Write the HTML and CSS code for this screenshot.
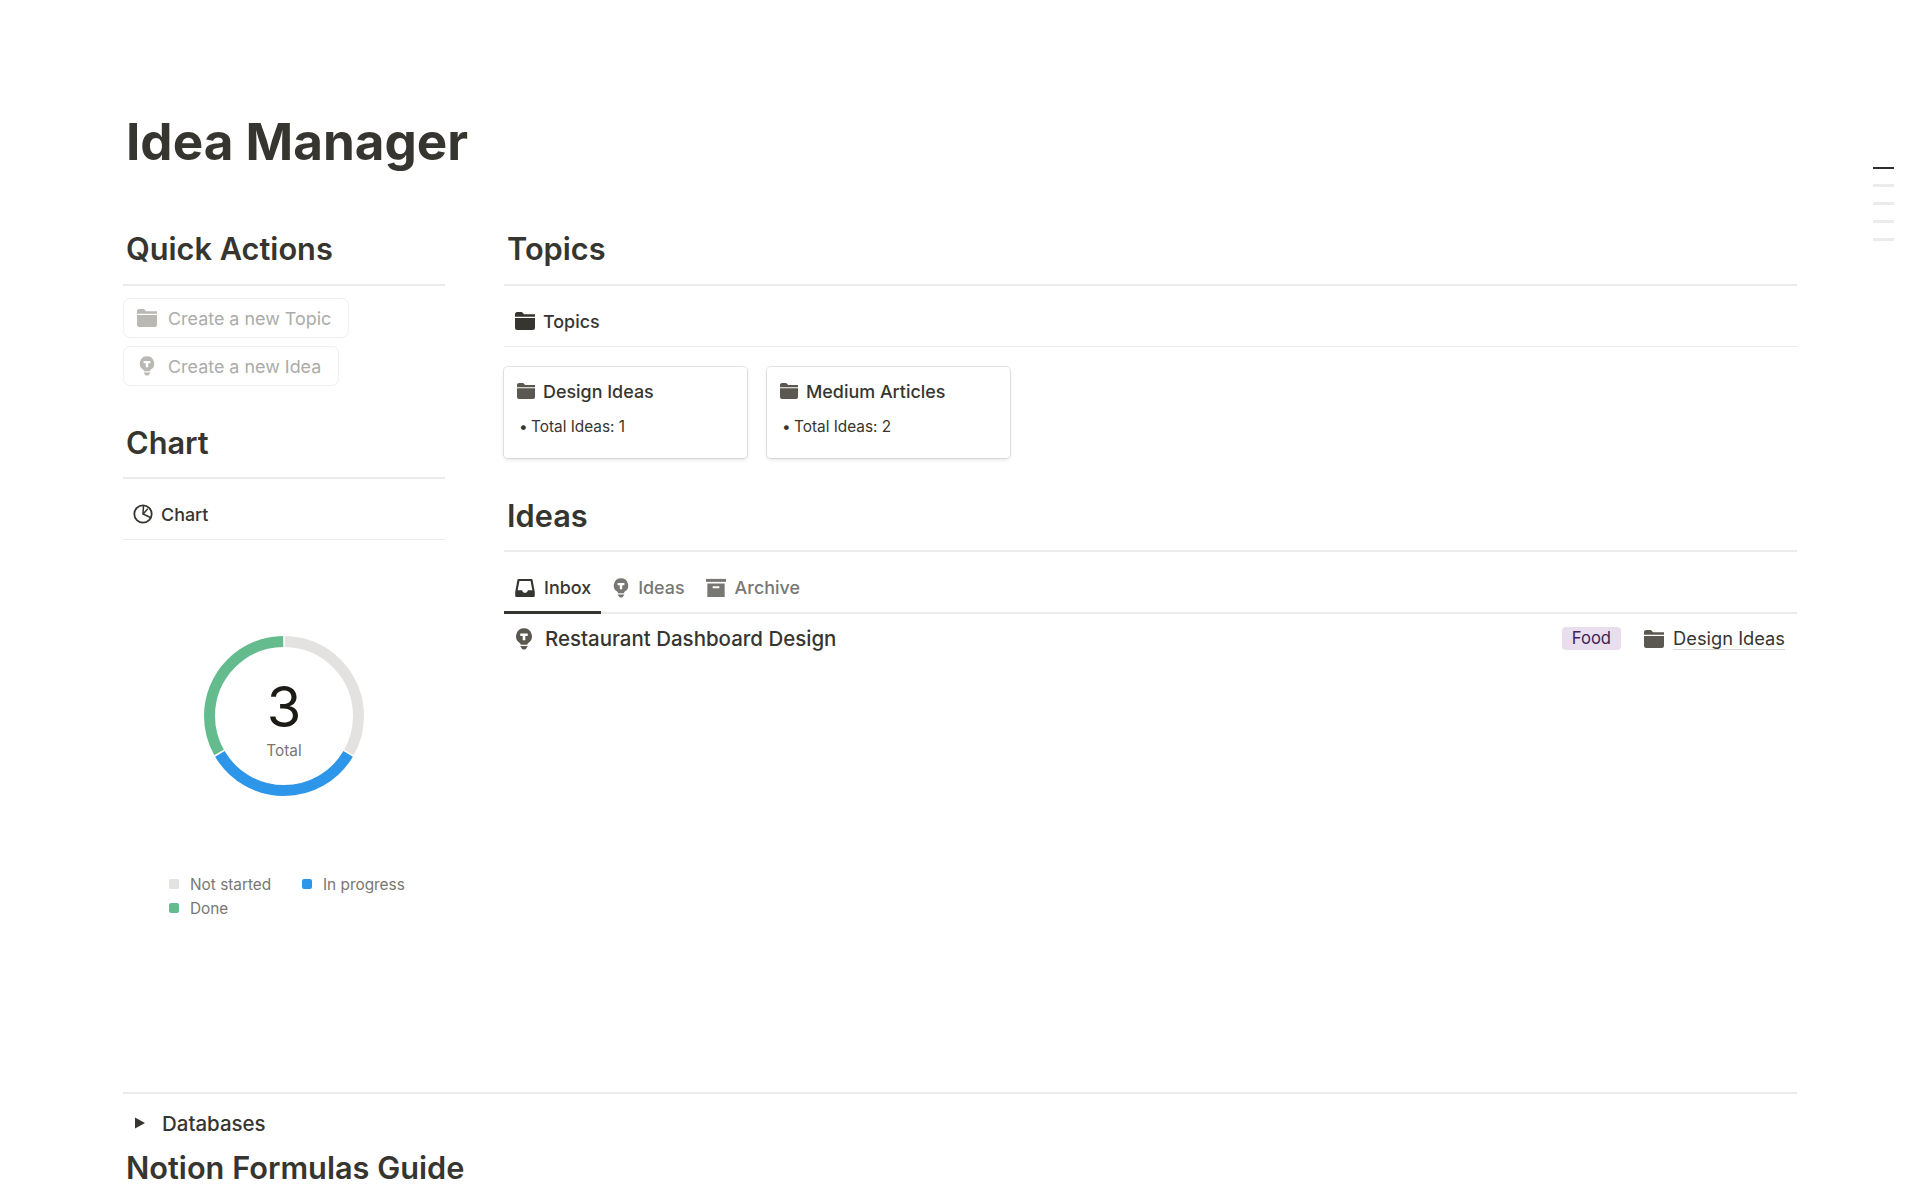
FILE: index.html
```html
<!DOCTYPE html>
<html lang="en">
<head>
<meta charset="utf-8">
<title>Idea Manager</title>
<link rel="stylesheet" href="styles.css">
</head>
<body>
<svg class="defs" width="0" height="0" aria-hidden="true">
  <symbol id="folder" viewBox="0 0 18 18">
    <path d="M0 3C0 1.900.9 1 2 1h4.200l2 2H18v2.200H0z"/>
    <path d="M0 6.200h18V15a2 2 0 0 1-2 2H2a2 2 0 0 1-2-2z"/>
  </symbol>
  <symbol id="bulb" viewBox="0 0 16 20">
    <path fill-rule="evenodd" d="M8 .3a7.200 7.200 0 0 0-3.800 13.300c.5.400.7.900.8 1.700h6c.1-.8.3-1.300.8-1.700A7.200 7.200 0 0 0 8 .3zM4.600 5h6.800v2.200H9.200v4H6.800v-4H4.600z"/>
    <path d="M4.500 16.400h7l-1.800 2.700c-.2.300-.5.400-.8.400H7.100c-.3 0-.6-.1-.8-.4z"/>
  </symbol>
  <symbol id="inbox" viewBox="0 0 18 18">
    <path fill-rule="evenodd" d="M3.200 .8h11.600c.5 0 .9.3 1 .8l2 10.900V16c0 .7-.5 1.200-1.200 1.200H1.400C.7 17.200.2 16.700.2 16v-3.500l2-10.900c.1-.5.5-.8 1-.8zM4 2.600 2.400 11h4c.2 1.400 1.300 2.300 2.600 2.300s2.400-.9 2.600-2.300h4L14 2.600z"/>
  </symbol>
  <symbol id="archive" viewBox="0 0 18 18">
    <path d="M0 .8h18v2.700H0z"/>
    <path fill-rule="evenodd" d="M1.200 5h15.600v12.200H1.200zM6 7.400v1.900h6V7.400z"/>
  </symbol>
  <symbol id="pie" viewBox="0 0 20 20">
    <circle cx="10" cy="10" r="8.700" fill="none" stroke="currentColor" stroke-width="1.800"/>
    <path d="M10.500 1.500 10 10l7.500 3.500M10 10l4.800-5.200" fill="none" stroke="currentColor" stroke-width="1.500"/>
  </symbol>
</svg>

<nav class="toc" aria-label="Outline">
  <span class="toc-line toc-active"></span>
  <span class="toc-line"></span>
  <span class="toc-line"></span>
  <span class="toc-line"></span>
  <span class="toc-line"></span>
</nav>

<main class="page">
  <h1 class="title">Idea Manager</h1>

  <div class="columns">
    <section class="left">
      <h2 class="heading">Quick Actions</h2>
      <div class="buttons">
        <a class="action"><svg class="ic-folder"><use href="#folder"/></svg>Create a new Topic</a>
        <a class="action"><svg class="ic-bulb"><use href="#bulb"/></svg>Create a new Idea</a>
      </div>

      <h2 class="heading heading-chart">Chart</h2>
      <div class="view-row view-row-chart">
        <svg class="ic-pie"><use href="#pie"/></svg><span>Chart</span>
      </div>

      <div class="donut">
        <svg class="donut-ring" viewBox="0 0 160 160">
          <g fill="none" stroke-width="11" transform="rotate(-90 80 80)">
            <circle cx="80" cy="80" r="74.500" pathLength="300" stroke="#e3e2e0" stroke-dasharray="99 201" stroke-dashoffset="-0.500"/>
            <circle cx="80" cy="80" r="74.500" pathLength="300" stroke="#2e96e9" stroke-dasharray="99 201" stroke-dashoffset="-100.500"/>
            <circle cx="80" cy="80" r="74.500" pathLength="300" stroke="#64bc8e" stroke-dasharray="99 201" stroke-dashoffset="-200.500"/>
          </g>
        </svg>
        <div class="donut-label">
          <span class="donut-num">3</span>
          <span class="donut-cap">Total</span>
        </div>
      </div>

      <ul class="legend">
        <li><i class="sw sw-grey"></i>Not started</li>
        <li><i class="sw sw-blue"></i>In progress</li>
        <li><i class="sw sw-green"></i>Done</li>
      </ul>
    </section>

    <section class="right">
      <h2 class="heading">Topics</h2>
      <div class="view-row">
        <svg class="ic-folder"><use href="#folder"/></svg><span>Topics</span>
      </div>
      <div class="cards">
        <article class="card">
          <div class="card-title"><svg class="ic-folder-sm"><use href="#folder"/></svg>Design Ideas</div>
          <div class="card-meta"><span class="dot">•</span>Total Ideas: 1</div>
        </article>
        <article class="card">
          <div class="card-title"><svg class="ic-folder-sm"><use href="#folder"/></svg>Medium Articles</div>
          <div class="card-meta"><span class="dot">•</span>Total Ideas: 2</div>
        </article>
      </div>

      <h2 class="heading heading-ideas">Ideas</h2>
      <div class="tabs">
        <a class="tab tab-active"><svg class="ic-tab"><use href="#inbox"/></svg>Inbox</a>
        <a class="tab"><svg class="ic-bulb"><use href="#bulb"/></svg>Ideas</a>
        <a class="tab"><svg class="ic-tab"><use href="#archive"/></svg>Archive</a>
      </div>
      <div class="idea">
        <svg class="ic-bulb-row"><use href="#bulb"/></svg>
        <span class="idea-name">Restaurant Dashboard Design</span>
        <span class="tag">Food</span>
        <svg class="ic-folder-link"><use href="#folder"/></svg>
        <a class="idea-link">Design Ideas</a>
      </div>
    </section>
  </div>

  <div class="divider"></div>
  <div class="toggle"><svg class="tri" viewBox="0 0 10 12"><path d="M0 .500 10 6 0 11.500z"/></svg>Databases</div>
  <h2 class="heading heading-guide">Notion Formulas Guide</h2>
</main>
</body>
</html>
```

FILE: styles.css
```css
* { box-sizing: border-box; }
html, body { margin: 0; height: 1199px; overflow: hidden; background: #fff; }
body {
  font-family: Inter, "Liberation Sans", sans-serif;
  color: #37352f;
  font-size: 17.92px;
  position: relative;
}
.defs { position: absolute; }
svg { fill: currentColor; flex: none; }

.toc { position: absolute; left: 1873px; top: 166px; display: flex; flex-direction: column; gap: 15px; }
.toc-line { display: block; width: 21px; height: 3px; background: #ebebe9; }
.toc-active { background: #2f2e2a; height: 2px; margin-top: 1px; }

.page { padding: 112px 123px 0; }
.title { margin: 0 0 0 3px; font-size: 51.2px; line-height: 58px; font-weight: 700; color: #37352f; }

.columns { display: grid; grid-template-columns: 322px 1293px; column-gap: 59px; margin-top: 60px; height: 862px; }

.heading {
  margin: 0;
  padding: 0 0 0 3px;
  font-size: 30.72px;
  line-height: 38px;
  font-weight: 600;
  height: 56px;
  border-bottom: 2px solid #ebebea;
}
.heading-chart { margin-top: 38px; height: 55px; }
.heading-ideas { margin-top: 39px; height: 55px; }
.heading-guide { border: 0; height: 40px; padding-top: 1px; }

.buttons { display: flex; flex-direction: column; align-items: flex-start; gap: 8px; margin-top: 12px; }
.action {
  display: flex;
  align-items: center;
  height: 40px;
  padding: 0 17px 0 13px;
  gap: 11px;
  border: 1px solid #efefee;
  border-radius: 7px;
  color: #acaba8;
}
.action svg { color: #bab8b3; }
.ic-folder { width: 20px; height: 20px; }
.ic-bulb { width: 16px; height: 20px; margin: 0 2px; }

.view-row { display: flex; align-items: center; height: 61px; padding: 10px 0 0 11px; gap: 8px; border-bottom: 1px solid #ebebea; font-weight: 500; }
.view-row-chart { padding: 10px 0 0 10px; gap: 8px; }
.ic-pie { width: 20px; height: 20px; }

.donut { display: grid; width: 160px; height: 160px; margin: 96px 0 0 81px; place-items: center; }
.donut-ring, .donut-label { grid-area: 1 / 1; }
.donut-ring { width: 160px; height: 160px; }
.donut-label { display: flex; flex-direction: column; align-items: center; padding-top: 1px; }
.donut-num { font-size: 56px; line-height: 66px; color: #1d1b16; }
.donut-cap { font-size: 15.36px; line-height: 18px; color: #787774; margin-top: 2px; }

.legend { list-style: none; margin: 76px 0 0 46px; padding: 0; display: grid; grid-template-columns: 133px auto; grid-auto-rows: 24px; font-size: 15.36px; color: #787774; }
.legend li { display: flex; align-items: center; gap: 11px; }
.sw { display: block; width: 10px; height: 10px; border-radius: 2px; }
.sw-grey { background: #e3e2e0; }
.sw-blue { background: #2e96e9; }
.sw-green { background: #64bc8e; }

.cards { display: flex; gap: 20px; margin-top: 20px; }
.card {
  width: 243px;
  height: 91px;
  padding: 12px 13px;
  border-radius: 4px;
  background: #fff;
  box-shadow: 0 0 0 1px rgba(15,15,15,.1), 0 2px 4px rgba(15,15,15,.1);
}
.card-title { display: flex; align-items: center; gap: 8px; height: 24px; font-weight: 500; }
.card-title svg { color: #5a5850; }
.ic-folder-sm { width: 18px; height: 18px; }
.card-meta { font-size: 15.36px; line-height: 20px; margin-top: 14px; }
.dot { display: inline-block; width: 14px; text-align: left; padding-left: 2px; }

.tabs { display: flex; height: 62px; border-bottom: 2px solid #ebebea; }
.tab { display: flex; align-items: center; gap: 9px; padding: 12px 10px 0 11px; color: #787774; margin-bottom: -2px; border-bottom: 3px solid transparent; font-weight: 500; }
.tab svg { color: #787774; }
.tab .ic-bulb { margin: 0 0 0 1px; }
.tab-active { color: #37352f; border-bottom-color: #37352f; }
.tab-active svg { color: #37352f; }
.ic-tab { width: 20px; height: 20px; }

.idea { display: flex; align-items: center; height: 49px; padding: 0 12px 0 11px; }
.ic-bulb-row { width: 18px; height: 22px; color: #5a5850; margin-right: 12px; }
.idea-name { font-size: 20.48px; font-weight: 500; flex: 1; }
.tag { background: #e8deee; color: #412454; border-radius: 4px; padding: 0 10px; line-height: 23px; font-size: 16.64px; margin-right: 23px; }
.ic-folder-link { width: 20px; height: 20px; color: #5a5850; margin-right: 9px; }
.idea-link { font-size: 18.3px; border-bottom: 1px solid #d9d8d5; line-height: 22px; }

.divider { border-top: 2px solid #ebebea; }
.toggle { display: flex; align-items: center; height: 54px; padding: 4px 0 0 12px; gap: 17px; font-size: 20.48px; font-weight: 500; color: #37352f; }
.tri { width: 10px; height: 12px; }
```
